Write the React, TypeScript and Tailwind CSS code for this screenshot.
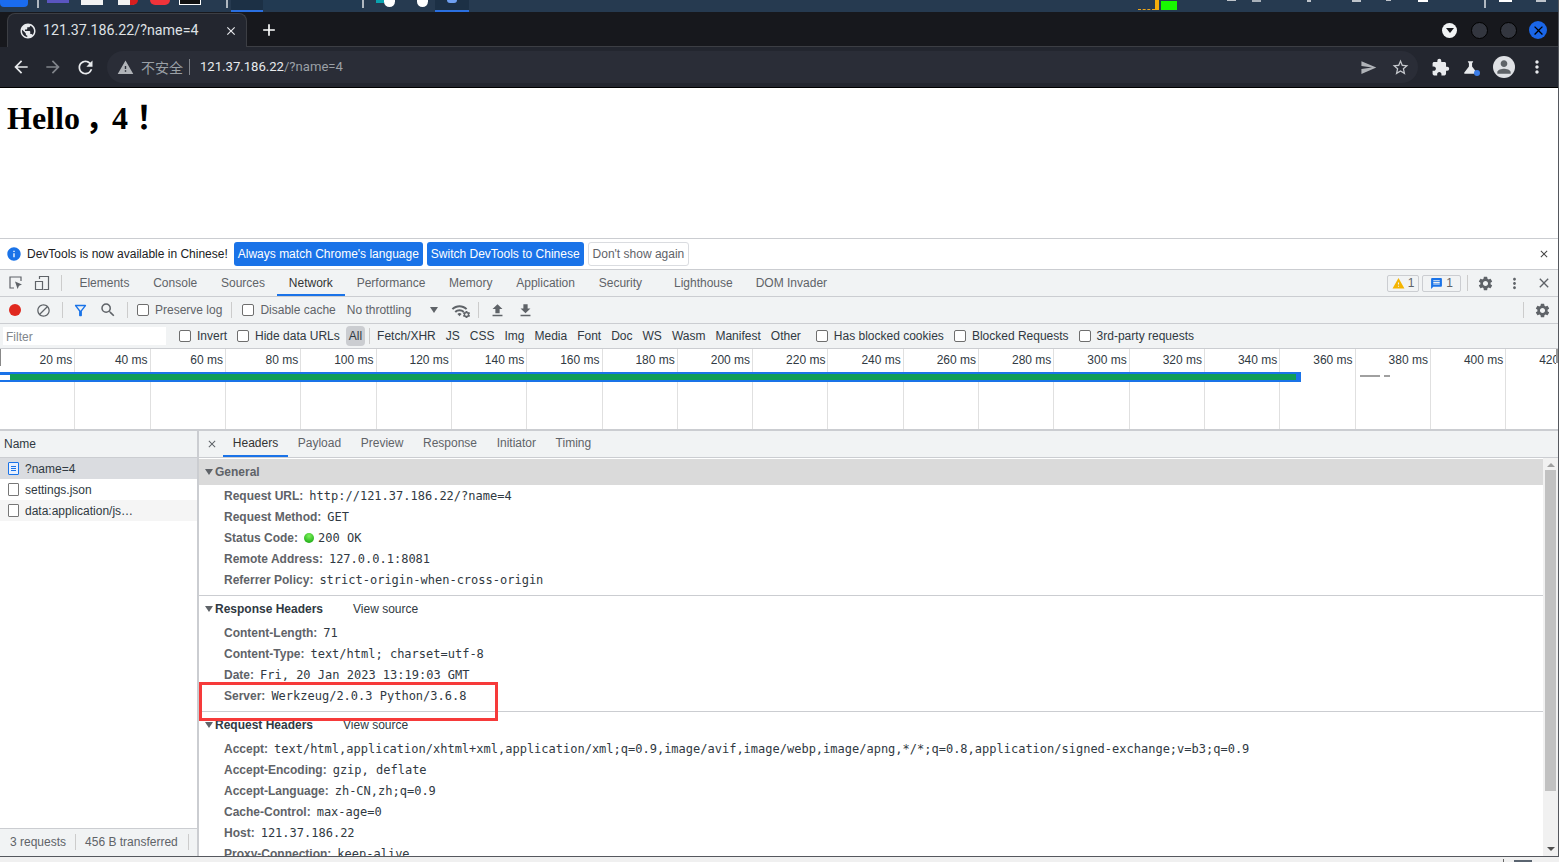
import type { ReactNode } from "react";
import {
  MdAdd,
  MdArrowBack,
  MdArrowForward,
  MdBlock,
  MdClose,
  MdExtension,
  MdFileDownload,
  MdFileUpload,
  MdInfo,
  MdMoreVert,
  MdOutlineFilterAlt,
  MdPerson,
  MdPublic,
  MdRefresh,
  MdSearch,
  MdSend,
  MdSettings,
  MdStarBorder,
  MdWarning,
  MdWifi,
  MdMessage,
  MdScience,
} from "react-icons/md";

const mainTabs = ["Elements", "Console", "Sources", "Network", "Performance", "Memory", "Application", "Security"];
const detailTabs = ["Headers", "Payload", "Preview", "Response", "Initiator", "Timing"];
const resourceTypes = ["Fetch/XHR", "JS", "CSS", "Img", "Media", "Font", "Doc", "WS", "Wasm", "Manifest", "Other"];
const ticks = [20, 40, 60, 80, 100, 120, 140, 160, 180, 200, 220, 240, 260, 280, 300, 320, 340, 360, 380, 400, 420];

const general = [
  ["Request URL:", "http://121.37.186.22/?name=4"],
  ["Request Method:", "GET"],
  ["Status Code:", "200 OK"],
  ["Remote Address:", "127.0.0.1:8081"],
  ["Referrer Policy:", "strict-origin-when-cross-origin"],
];
const responseHeaders = [
  ["Content-Length:", "71"],
  ["Content-Type:", "text/html; charset=utf-8"],
  ["Date:", "Fri, 20 Jan 2023 13:19:03 GMT"],
  ["Server:", "Werkzeug/2.0.3 Python/3.6.8"],
];
const requestHeaders = [
  ["Accept:", "text/html,application/xhtml+xml,application/xml;q=0.9,image/avif,image/webp,image/apng,*/*;q=0.8,application/signed-exchange;v=b3;q=0.9"],
  ["Accept-Encoding:", "gzip, deflate"],
  ["Accept-Language:", "zh-CN,zh;q=0.9"],
  ["Cache-Control:", "max-age=0"],
  ["Host:", "121.37.186.22"],
  ["Proxy-Connection:", "keep-alive"],
];

const Checkbox = ({ label, className }: { label: string; className?: string }) => (
  <label className={`flex items-center gap-[6px] ${className ?? ""}`}>
    <span className="w-[12px] h-[12px] rounded-[2px] border border-[#6e6e6e] bg-white" />
    <span>{label}</span>
  </label>
);

const Divider = ({ className }: { className?: string }) => (
  <div className={`w-px h-[16px] bg-[#ccc] shrink-0 ${className ?? ""}`} />
);

const HeaderRow = ({ name, value, status }: { name: string; value: string; status?: boolean }) => (
  <div className="h-[21px] flex items-center pl-[25px] whitespace-nowrap shrink-0">
    <span className="font-bold text-[#5f6368]">{name}</span>
    {status && (
      <span className="ml-[6px] -mr-[2px] w-[10px] h-[10px] rounded-full bg-[radial-gradient(circle_at_50%_30%,#7cf25a,#0a9d08)]" />
    )}
    <span className="ml-[6px] font-['DejaVu_Sans_Mono',monospace] text-[#303942]">{value}</span>
  </div>
);

const SectionTitle = ({ children, source }: { children: ReactNode; source?: number }) => (
  <div className="flex items-center pl-[6px] font-bold text-[#303942] whitespace-nowrap">
    <span className="w-0 h-0 border-x-[4px] border-x-transparent border-t-[6px] border-t-[#5f6368] mr-[2px]" />
    <span>{children}</span>
    {source ? (
      <span className="font-normal" style={{ marginLeft: source }}>
        View source
      </span>
    ) : null}
  </div>
);

const DocIcon = ({ active }: { active?: boolean }) => (
  <span
    className={`w-[11px] h-[13px] rounded-[1px] border flex flex-col justify-center gap-[1px] px-[2px] ${
      active ? "border-[#1a73e8] bg-[#e8f0fe]" : "border-[#777] bg-white"
    }`}
  >
    {active && (
      <>
        <span className="h-px bg-[#1a73e8]" />
        <span className="h-px bg-[#1a73e8]" />
        <span className="h-px bg-[#1a73e8]" />
      </>
    )}
  </span>
);

// only the bottom few pixels of the desktop panel are on screen
const Taskbar = () => (
  <div className="h-[12px] bg-[#263a50] flex items-start overflow-hidden shrink-0 [&>*]:shrink-0">
    <div className="w-[28px] h-[7px] bg-[#1a6cf0] rounded-b-[4px]" />
    <div className="w-[2px] h-[8px] bg-[#b0b8c0] ml-[9px]" />
    <div className="w-[22px] h-[3px] bg-[#5a55c0] ml-[8px]" />
    <div className="w-[22px] h-[5px] bg-[#f2f2f2] ml-[12px]" />
    <div className="w-[20px] h-[5px] bg-[#f2f2f2] ml-[15px] rounded-br-[8px] border-r-[8px] border-r-[#d81e1e]" />
    <div className="w-[20px] h-[5px] bg-[#f0333a] ml-[12px] rounded-b-full" />
    <div className="w-[22px] h-[5px] bg-[#111] border-x border-b border-white ml-[9px]" />
    <div className="w-[2px] h-[8px] bg-[#b0b8c0] ml-[25px]" />
    <div className="w-[32px] h-[12px] bg-[#1c3045] border-b-[2px] border-b-[#2a6fe0] ml-[3px]" />
    <div className="w-[99px] h-[10px] bg-[#223a52]" />
    <div className="w-[2px] h-[8px] bg-[#b0b8c0]" />
    <div className="w-[8px] h-[3px] bg-[#0aa3b0] ml-[12px]" />
    <div className="w-[11px] h-[7px] rounded-b-full bg-white" />
    <div className="w-[11px] h-[7px] rounded-b-full bg-white ml-[22px]" />
    <div className="w-[34px] h-[12px] bg-[#1c3045] border-b-[2px] border-b-[#2a6fe0] ml-[7px] flex justify-center">
      <span className="w-[10px] h-[3px] rounded-b-full bg-[#6f9ff0]" />
    </div>
    <div className="ml-[669px] flex items-end h-[10px]">
      <span className="w-[17px] h-px border-b border-dashed border-b-[#f0a818]" />
      <span className="w-[4px] h-[10px] bg-[#f5ad0a] mr-[2px]" />
      <span className="w-[16px] h-[9px] bg-[#18f800]" />
    </div>
    <div className="ml-[50px] w-[9px] h-px bg-white/70" />
    <div className="ml-[16px] w-[9px] h-[2px] bg-white/60" />
    <div className="ml-[46px] w-[4px] h-[2px] bg-white/70" />
    <div className="ml-[41px] w-[9px] h-[2px] bg-white/70" />
    <div className="ml-[25px] w-[5px] h-px bg-white/70" />
    <div className="ml-[27px] w-[10px] h-[2px] bg-white" />
    <div className="ml-[56px] w-[2px] h-[8px] bg-[#b0b8c0]" />
    <div className="ml-[13px] w-[13px] h-[2px] bg-white" />
    <div className="ml-[24px] w-[10px] h-[2px] bg-white/70" />
  </div>
);

const Chrome = () => (
  <>
    <div className="h-[35px] bg-[#17181d] flex items-end pl-[7px] relative shrink-0">
      <div className="w-[240px] h-[34px] bg-[#23262f] rounded-t-[8px] flex items-center pl-[11px] pr-[8px] border-t border-x border-[#3c3e44]">
        <MdPublic size={18} className="text-[#e8eaed]" />
        <span className="ml-[6px] text-[14.25px] text-[#dfe1e5] flex-1">121.37.186.22/?name=4</span>
        <MdClose size={14} className="text-[#e8eaed]" />
      </div>
      <MdAdd size={20} className="text-white ml-[12px] mb-[7px]" />
      <div className="ml-auto flex items-center gap-[12px] mb-[8px] pr-[11px]">
        <span className="w-[15px] h-[15px] rounded-full bg-[#f1f3f4] flex items-center justify-center mr-[2px]">
          <span className="w-0 h-0 border-x-[4px] border-x-transparent border-t-[5px] border-t-[#17181d]" />
        </span>
        <span className="w-[17px] h-[17px] rounded-full bg-[#33363f] border border-black" />
        <span className="w-[17px] h-[17px] rounded-full bg-[#33363f] border border-black" />
        <span className="w-[18px] h-[18px] rounded-full bg-[#1a66e8] flex items-center justify-center">
          <MdClose size={15} className="text-black" />
        </span>
      </div>
      <div className="absolute left-[247px] right-0 bottom-0 h-px bg-[#3c3e44]" />
    </div>

    <div className="h-[41px] bg-[#23262f] border-b border-b-black flex items-center pl-[11px] shrink-0">
      <MdArrowBack size={20} className="text-[#e8eaed]" />
      <MdArrowForward size={20} className="text-[#80848b] ml-[12px]" />
      <MdRefresh size={21} className="text-[#e8eaed] ml-[12px]" />
      <div className="ml-[11px] w-[1311px] h-[32px] bg-[#2a2d37] rounded-full flex items-center pl-[10px] pr-[8px] shrink-0">
        <MdWarning size={17} className="text-[#b0b3b8]" />
        <span className="ml-[7px] text-[14px] text-[#9aa0a6] font-['Noto_Sans_CJK_SC',sans-serif]">不安全</span>
        <span className="ml-[6px] mr-[10px] w-px h-[16px] bg-[#80848b]" />
        <span className="text-[13.1px] text-[#e8eaed]">121.37.186.22</span>
        <span className="text-[13.1px] text-[#9aa0a6]">/?name=4</span>
        <MdSend size={17} className="ml-auto text-[#b0b3b8]" />
        <MdStarBorder size={19} className="ml-[14px] text-[#c4c7cc]" />
      </div>
      <MdExtension size={19} className="ml-[13px] text-[#e8eaed] shrink-0" />
      <span className="relative ml-[11px] w-[18px] h-[18px] shrink-0">
        <MdScience size={19} className="text-[#e8eaed]" />
        <span className="absolute right-[-1px] bottom-0 w-[6px] h-[6px] rounded-full bg-[#3b7de8]" />
      </span>
      <span className="ml-[14px] w-[22px] h-[22px] rounded-full bg-[#dfe1e5] flex items-center justify-center overflow-hidden shrink-0">
        <MdPerson size={20} className="text-[#5f6368]" />
      </span>
      <MdMoreVert size={20} className="ml-[12px] text-[#e8eaed] shrink-0" />
    </div>
  </>
);

const InfoBar = () => (
  <div className="h-[32px] border-y border-[#cbcdd1] bg-white flex items-center pl-[7px] pr-[8px] shrink-0">
    <MdInfo size={16} className="text-[#1a73e8] -ml-[1px]" />
    <span className="ml-[5px] text-[#202124]">DevTools is now available in Chinese!</span>
    <span className="ml-[6px] h-[24px] px-[4px] flex items-center bg-[#1a73e8] text-white rounded-[3px]">Always match Chrome's language</span>
    <span className="ml-[4px] h-[24px] px-[4px] flex items-center bg-[#1a73e8] text-white rounded-[3px]">Switch DevTools to Chinese</span>
    <span className="ml-[4px] h-[24px] px-[4px] flex items-center text-[#5f6368] border border-[#dadce0] rounded-[3px]">Don't show again</span>
    <MdClose size={12} className="ml-auto text-[#444]" />
  </div>
);

const MainTabs = () => (
  <div className="h-[27px] bg-[#f1f3f4] border-b border-b-[#cbcdd1] flex items-center shrink-0 text-[#5f6368]">
    <svg width="16" height="16" viewBox="0 0 16 16" className="ml-[8px] text-[#5f6368]" fill="none" stroke="currentColor">
      <path d="M6 13H2V2h11v4" strokeWidth="1.2" />
      <path d="M7 6.5l7 3-3 1.2L9.6 14z" fill="currentColor" stroke="none" />
    </svg>
    <svg width="16" height="16" viewBox="0 0 16 16" className="ml-[10px] text-[#5f6368]" fill="none" stroke="currentColor">
      <path d="M5.5 4V1.5h9v13h-5M1.5 6.5h7v8h-7z" strokeWidth="1.2" />
    </svg>
    <Divider className="ml-[11px] mr-[5.5px]" />
    {mainTabs.map((tab) => (
      <div
        key={tab}
        className={`h-full px-[11.9px] flex items-center ${
          tab === "Network" ? "text-[#333] border-b-[2px] border-b-[#1a73e8] pt-[2px]" : ""
        }`}
      >
        {tab}
      </div>
    ))}
    <div className="ml-[20px]">Lighthouse</div>
    <div className="ml-[23px]">DOM Invader</div>
    <div className="ml-auto h-[17px] px-[4px] flex items-center gap-[3px] border border-[#cbcdd1] rounded-[2px]">
      <MdWarning size={13} className="text-[#f4b400]" />
      <span>1</span>
    </div>
    <div className="ml-[3px] h-[17px] px-[7px] flex items-center gap-[3px] border border-[#cbcdd1] rounded-[2px]">
      <MdMessage size={13} className="text-[#1a73e8]" />
      <span>1</span>
    </div>
    <Divider className="ml-[6px]" />
    <MdSettings size={17} className="ml-[9px] text-[#5f6368]" />
    <MdMoreVert size={17} className="ml-[12px] text-[#5f6368]" />
    <MdClose size={16} className="ml-[13px] mr-[6px] text-[#5f6368]" />
  </div>
);

const NetworkToolbar = () => (
  <div className="h-[27px] bg-[#f1f3f4] border-b border-b-[#cbcdd1] flex items-center shrink-0 text-[#5f6368]">
    <span className="ml-[9px] w-[12px] h-[12px] rounded-full bg-[#e0281e]" />
    <MdBlock size={15} className="ml-[15px] text-[#5f6368]" />
    <Divider className="ml-[11px]" />
    <MdOutlineFilterAlt size={17} className="ml-[9px] text-[#1a73e8]" />
    <MdSearch size={18} className="ml-[10px] text-[#5f6368]" />
    <Divider className="ml-[10px]" />
    <Checkbox label="Preserve log" className="ml-[9px]" />
    <Divider className="ml-[9px]" />
    <Checkbox label="Disable cache" className="ml-[10px]" />
    <span className="ml-[11px]">No throttling</span>
    <span className="ml-[19px] w-0 h-0 border-x-[4px] border-x-transparent border-t-[6px] border-t-[#5f6368]" />
    <span className="relative ml-[13px] w-[18px] h-[16px]">
      <MdWifi size={17} className="text-[#5f6368]" />
      <MdSettings size={9} className="absolute right-[-2px] bottom-[-1px] text-[#5f6368]" />
    </span>
    <Divider className="ml-[9px]" />
    <MdFileUpload size={17} className="ml-[10px] text-[#5f6368]" />
    <MdFileDownload size={17} className="ml-[11px] text-[#5f6368]" />
    <Divider className="ml-auto" />
    <MdSettings size={17} className="ml-[10px] mr-[7px] text-[#5f6368]" />
  </div>
);

const FilterBar = () => (
  <div className="h-[25px] bg-[#f1f3f4] border-b border-b-[#cbcdd1] flex items-center shrink-0 text-[#303942] whitespace-nowrap">
    <div className="ml-[3px] w-[163px] h-[18px] bg-white pl-[3px] pt-px flex items-center text-[#80868b]">Filter</div>
    <Checkbox label="Invert" className="ml-[13px]" />
    <Checkbox label="Hide data URLs" className="ml-[10px]" />
    <span className="ml-[6px] h-[20px] px-[3px] flex items-center bg-[#cbcdd1] rounded-[4px]">All</span>
    <Divider className="ml-[4px]" />
    {resourceTypes.map((type, i) => (
      <span key={type} className={i === 0 ? "ml-[7px]" : "ml-[10px]"}>
        {type}
      </span>
    ))}
    <Checkbox label="Has blocked cookies" className="ml-[15px]" />
    <Checkbox label="Blocked Requests" className="ml-[10px]" />
    <Checkbox label="3rd-party requests" className="ml-[10px]" />
  </div>
);

const Overview = () => (
  <div className="h-[82px] bg-white border-b-[2px] border-b-[#cbcdd1] relative flex overflow-hidden shrink-0 text-[#303942]">
    {ticks.map((t) => (
      <div key={t} className="w-[75.32px] shrink-0 border-r border-r-[#e0e0e0] text-right pr-[2px] pt-[2px] whitespace-nowrap">
        {t} ms
      </div>
    ))}
    <div className="absolute left-0 top-0 w-px h-[17px] bg-[#888]" />
    <div className="absolute left-0 top-[23px] w-[1301px] h-[10px] bg-[#1a73e8] flex items-center py-[2px]">
      <div className="w-[10px] h-[5px] bg-white" />
      <div className="w-[1286px] h-[6px] bg-[#0f9d58]" />
    </div>
    <div className="absolute left-[1360px] top-[26px] w-[20px] h-[2px] bg-[#a0a0a0]" />
    <div className="absolute left-[1384px] top-[26px] w-[6px] h-[2px] bg-[#a0a0a0]" />
    <div className="absolute right-0 top-0 bottom-0 w-[2px] bg-white" />
    <div className="absolute right-0 top-0 h-[14px] w-[2px] bg-[#999]" />
  </div>
);

const NamePanel = () => (
  <div className="w-[199px] shrink-0 flex flex-col border-r-[2px] border-r-[#cbcdd1] text-[#303942]">
    <div className="h-[27px] bg-[#f1f3f4] border-b-[1px] border-b-[#cbcdd1] pl-[4px] flex items-center shrink-0">Name</div>
    <div className="h-[21px] bg-[#dadce0] flex items-center pl-[8px] gap-[6px] shrink-0">
      <DocIcon active />
      <span>?name=4</span>
    </div>
    <div className="h-[21px] flex items-center pl-[8px] gap-[6px] shrink-0">
      <DocIcon />
      <span>settings.json</span>
    </div>
    <div className="h-[21px] bg-[#f5f5f5] flex items-center pl-[8px] gap-[6px] shrink-0">
      <DocIcon />
      <span>data:application/js…</span>
    </div>
    <div className="mt-auto h-[28px] bg-[#f1f3f4] border-t border-t-[#cbcdd1] pb-px flex items-center text-[#5f6368] shrink-0">
      <span className="ml-[10px]">3 requests</span>
      <Divider className="ml-[9px]" />
      <span className="ml-[9px]">456 B transferred</span>
      <Divider className="ml-[10px]" />
    </div>
  </div>
);

const DetailPanel = () => (
  <div className="flex-1 min-w-0 flex flex-col relative">
    <div className="h-[27px] bg-[#f1f3f4] border-b border-b-[#cbcdd1] flex items-center text-[#5f6368] shrink-0">
      <MdClose size={12} className="ml-[7px] mr-[5px] text-[#5f6368]" />
      {detailTabs.map((tab) => (
        <div
          key={tab}
          className={`h-full px-[9.8px] flex items-center border-b-[2px] ${
            tab === "Headers" ? "text-[#333] border-b-[#1a73e8]" : "border-b-transparent"
          }`}
        >
          {tab}
        </div>
      ))}
    </div>
    <div className="flex-1 min-h-0 flex">
      <div className="flex-1 min-w-0 flex flex-col overflow-hidden pt-px">
        <div className="h-[26px] bg-[#dadada] flex items-center shrink-0 text-[#5f6368]">
          <SectionTitle>
            <span className="text-[#5f6368]">General</span>
          </SectionTitle>
        </div>
        <div className="pb-[5px] shrink-0 border-b border-b-[#cbcdd1]">
          {general.map(([k, v]) => (
            <HeaderRow key={k} name={k} value={v} status={k === "Status Code:"} />
          ))}
        </div>
        <div className="shrink-0 h-[26px] flex items-center">
          <SectionTitle source={30}>Response Headers</SectionTitle>
        </div>
        <div className="pb-[5px] shrink-0 border-b border-b-[#cbcdd1]">
          {responseHeaders.map(([k, v]) => (
            <HeaderRow key={k} name={k} value={v} />
          ))}
        </div>
        <div className="h-[26px] shrink-0 flex items-center">
          <SectionTitle source={30}>Request Headers</SectionTitle>
        </div>
        {requestHeaders.map(([k, v]) => (
          <HeaderRow key={k} name={k} value={v} />
        ))}
      </div>
      <div className="w-[15px] shrink-0 bg-[#f1f1f1] flex flex-col items-center pt-[5px] pb-[5px]">
        <span className="w-0 h-0 border-x-[4px] border-x-transparent border-b-[4px] border-b-[#a0a0a0]" />
        <span className="mt-[3px] w-[11px] h-[321px] bg-[#c1c1c1]" />
        <span className="mt-auto w-0 h-0 border-x-[4px] border-x-transparent border-t-[4px] border-t-[#505050]" />
      </div>
    </div>
    <div className="absolute left-0 top-[251px] w-[299px] h-[39px] border-[3px] border-[#f63a3a]" />
  </div>
);

const App = () => {
  return (
    <div className="w-[1559px] h-[862px] overflow-hidden flex flex-col bg-[#f0f0f0] font-['Liberation_Sans',Arial,sans-serif] text-[12px]">
      <div className="h-[857px] shrink-0 flex flex-col border-r border-r-[#55585e] border-b border-b-[#55585e]">
        <Taskbar />
        <div className="font-['Roboto',sans-serif]">
          <Chrome />
        </div>
        <div className="h-[150px] bg-white pl-[7px] pt-[12px] shrink-0">
          <h1 className="font-['Liberation_Serif','Noto_Sans_CJK_KR',serif] font-bold text-[32px] leading-[37px] text-black">
            Hello<span className="ml-[5px] tracking-[-5px]">，</span>4！
          </h1>
        </div>
        <InfoBar />
        <MainTabs />
        <NetworkToolbar />
        <FilterBar />
        <Overview />
        <div className="flex-1 min-h-0 flex bg-white">
          <NamePanel />
          <DetailPanel />
        </div>
      </div>
      <div className="flex-1 flex items-end">
        <div className="ml-[1503px] w-px h-[3px] bg-[#666]" />
        <div className="ml-[10px] w-[18px] h-[2px] bg-[#5a6470]" />
      </div>
    </div>
  );
};

export default App;
